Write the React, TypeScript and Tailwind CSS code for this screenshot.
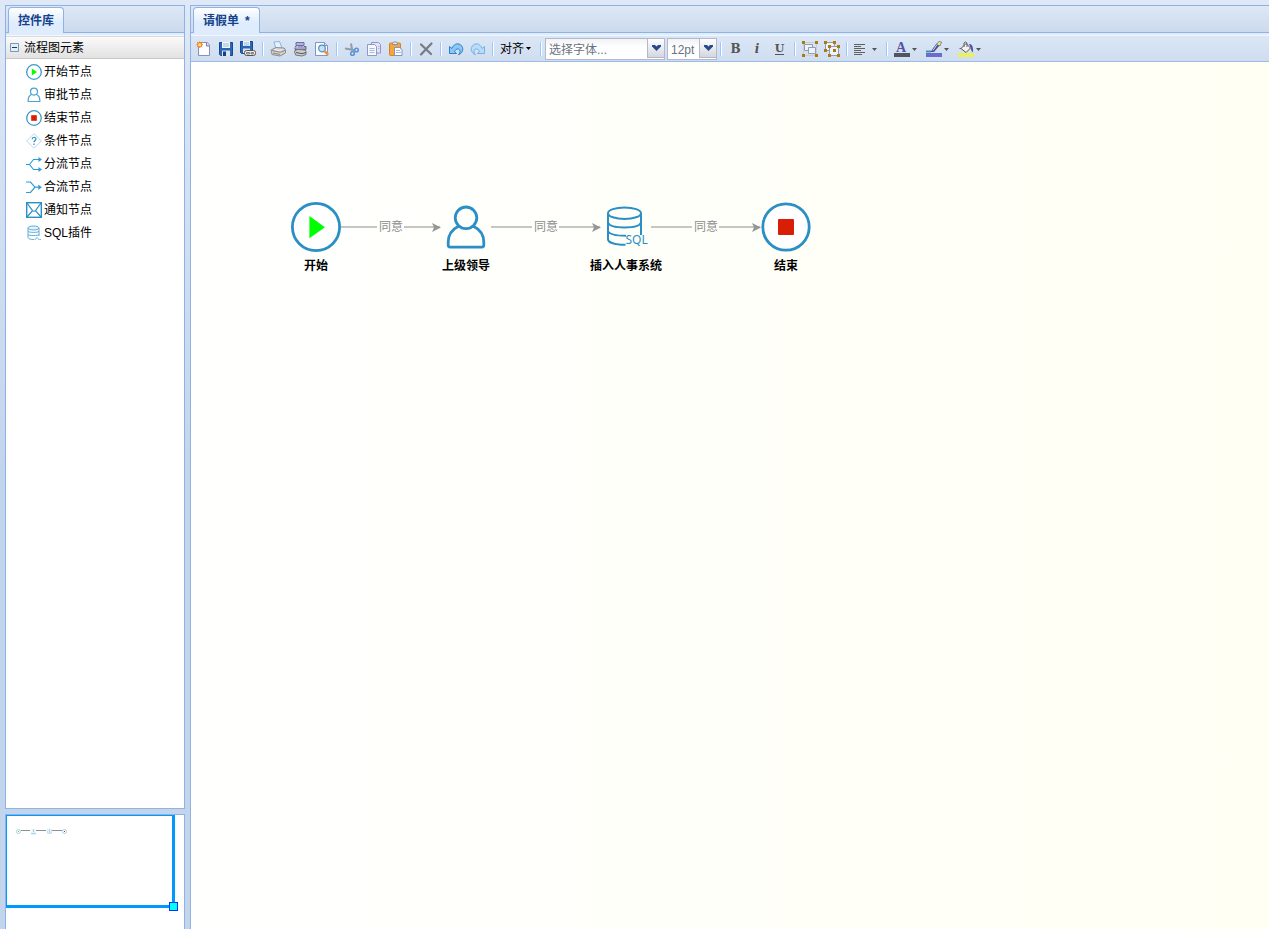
import React from "react";

type Kids = { children?: React.ReactNode };

function Svg({ children, size = 16, box = "0 0 16 16" }: Kids & { size?: number; box?: string }) {
  return (
    <svg width={size} height={size} viewBox={box} fill="none" aria-hidden="true" className="block shrink-0">
      {children}
    </svg>
  );
}

/* ---------- node drawings, 50 x 50 ---------- */

const BLUE = "#2a8fc5";

const startShape = (
  <>
    <circle cx="25" cy="25" r="23.6" fill="#fff" stroke={BLUE} strokeWidth="2.8" />
    <path d="M18.4 14 34 25.3 18.4 36.3Z" fill="#0f0" />
  </>
);
const endShape = (
  <>
    <circle cx="25" cy="25" r="23.2" fill="#fff" stroke={BLUE} strokeWidth="2.8" />
    <rect x="17" y="17" width="16" height="16" rx="1" fill="#d81e06" />
  </>
);
const personShape = (
  <g stroke={BLUE} strokeWidth="2.8">
    <circle cx="25" cy="15.8" r="10.8" />
    <path d="M17.5 24.2C11 27.4 7.200 33.300 7.200 40.300v2.800c0 1.200.8 2 2 2h31.600c1.200 0 2-.8 2-2v-2.800c0-7-3.800-12.900-10.300-16.100" />
  </g>
);
const sqlShape = (
  <g>
    <g stroke={BLUE} strokeWidth="2">
      <ellipse cx="23.500" cy="11.200" rx="16.500" ry="5.800" />
      <path d="M7 11.500V37c0 3.500 7 5.800 17.500 5.800" />
      <path d="M40 11.500V33M7 20.500c1 3.300 8 5 16.500 5s15.500-1.700 16.500-5M7 29c1.200 3.200 8 4.800 18 4.800" />
    </g>
    <text x="24.500" y="42" fontSize="12" fill={BLUE} fontFamily="Noto Sans, sans-serif">
      SQL
    </text>
  </g>
);

/* ---------- palette icons ---------- */

const PBLUE = "#2e9bd6";

const palette: { label: string; icon: React.ReactNode }[] = [
  {
    label: "开始节点",
    icon: (
      <Svg>
        <circle cx="8" cy="8" r="7.300" stroke="#3d9acb" strokeWidth="1.300" />
        <path d="M5.800 4.500 11 8l-5.200 3.500Z" fill="#0f0" />
      </Svg>
    ),
  },
  {
    label: "审批节点",
    icon: (
      <Svg>
        <g stroke="#4ba3cf" strokeWidth="1.200">
          <circle cx="8" cy="4.600" r="3.500" />
          <path d="M5.700 7.300C3.500 8.500 2.200 10.500 2.200 13v1.500h11.600V13c0-2.500-1.300-4.500-3.500-5.700" />
        </g>
      </Svg>
    ),
  },
  {
    label: "结束节点",
    icon: (
      <Svg>
        <circle cx="8" cy="8" r="7.300" stroke="#3d9acb" strokeWidth="1.300" />
        <rect x="5.200" y="5.200" width="5.600" height="5.600" fill="#d81e06" />
      </Svg>
    ),
  },
  {
    label: "条件节点",
    icon: (
      <Svg>
        <path d="M8 .7 15.300 8 8 15.300.7 8Z" stroke="#b5d8ea" />
        <path d="M6.200 6.200c0-2.600 3.700-2.500 3.700-.2C9.900 7.500 8 7.500 8 9.300M8 10.600v1.400" stroke={BLUE} strokeWidth="1.200" />
      </Svg>
    ),
  },
  {
    label: "分流节点",
    icon: (
      <Svg>
        <path d="M0 8.500h3.500l4-5H13M3.500 8.500l4 5H13" stroke={PBLUE} strokeWidth="1.200" />
        <path d="m12.500 1 3.500 2.500L12.500 6ZM12.500 11l3.500 2.500-3.500 2.500Z" fill={PBLUE} />
      </Svg>
    ),
  },
  {
    label: "合流节点",
    icon: (
      <Svg>
        <path d="M0 3h4.500L9 8.200 4.500 13.500H0M9 8.200h5" stroke={PBLUE} strokeWidth="1.200" />
        <path d="m12.300 5.500 3.500 2.700-3.500 2.700Z" fill={PBLUE} />
      </Svg>
    ),
  },
  {
    label: "通知节点",
    icon: (
      <Svg>
        <rect x=".7" y=".7" width="14.600" height="14.600" stroke={BLUE} strokeWidth="1.400" />
        <path d="m1 1 5.500 7.600q1.500 1.300 3 0L15 1M1 15l5.500-6.400M15 15 9.500 8.600" stroke={BLUE} strokeWidth="1.200" />
      </Svg>
    ),
  },
  {
    label: "SQL插件",
    icon: (
      <Svg>
        <g stroke="#5aabd6" strokeWidth="1">
          <ellipse cx="7.500" cy="3" rx="5.500" ry="2" fill="#e3f2fa" />
          <path d="M2 3v9.500c0 1.300 3 2 6 2M13 3v8M2 6.200c.6 1.600 10.400 1.600 11 0M2 9.400c.6 1.600 10.400 1.600 11 0" />
          <path d="M8.500 14.300q1.500.5 1.500-.8t1.300-.7q1 .2 1 1t1.200.7h1.500" strokeWidth=".8" />
        </g>
      </Svg>
    ),
  },
];

/* ---------- toolbar icons ---------- */

const icons = {
  fresh: (
    <Svg>
      <path d="M4 1.500h7.500l2 2.500v10.500H2.500V3z" fill="#fdfdff" stroke="#8791b5" />
      <path d="M10.500 1.500V5h3" fill="#d5dbee" stroke="#7580aa" />
      <circle cx="3.700" cy="3.700" r="2.600" fill="#f79436" />
      <path d="M3.700.4v6.600M.4 3.700h6.600M1.200 1.200l5 5M6.200 1.200l-5 5" stroke="#f2673a" strokeWidth=".8" />
      <circle cx="3.700" cy="3.700" r="1.500" fill="#fff16b" />
    </Svg>
  ),
  save: (
    <Svg>
      <path d="M1.500 1.500h13v13h-12l-1-1z" fill="#2b65b5" stroke="#174a91" />
      <path d="M4 1h8v6H4z" fill="#eef5fc" />
      <path d="M5 3h6M5 5h6" stroke="#9db9db" />
      <path d="M4 9.500h8V15H4z" fill="#dce4ec" />
      <path d="M5 10.500h3V15H5z" fill="#17407c" />
    </Svg>
  ),
  saveAs: (
    <Svg>
      <path d="M.5.5h12v12h-11l-1-1z" fill="#2b65b5" stroke="#174a91" />
      <path d="M3 0h7v5H3z" fill="#eef5fc" />
      <path d="M4 2h5M4 4h5" stroke="#9db9db" />
      <path d="M3 7.500h7V12H3z" fill="#dce4ec" />
      <rect x="4.500" y="9.500" width="11" height="5" rx="2" fill="#f0f0f0" stroke="#555" />
      <path d="M6.500 11.500h3v1.500h-3zM11 11.500h2.500v1.500H11z" fill="#ccc" stroke="#666" strokeWidth=".8" />
    </Svg>
  ),
  print: (
    <Svg>
      <path d="M4 1 9.500.5 12 7 6 8z" fill="#e7f3ff" stroke="#83b5e6" />
      <path d="m1 9 5-2.500 8 .5 1.500 2v3L10 15l-8-1.500z" fill="#d3d3d3" stroke="#8e8e8e" />
      <path d="m2 9.500 8 1.700 5-1.700M3 12l7 1.500" stroke="#888" />
      <path d="m4.500 8.500 5 1 3-1" stroke="#f6f6f6" />
      <path d="M12.500 12.200h1.500" stroke="#eeb13e" />
    </Svg>
  ),
  printSetup: (
    <Svg>
      <path d="M4 1.500h8v3H4z" fill="#b5b2dc" stroke="#6e6aa8" />
      <path d="M6 5h5v2H6z" fill="#9a97c4" />
      <path d="M3 5.500h1.500M12 5.500h2v3H3v-2" fill="#a5a2c8" stroke="#66638e" />
      <path d="m2.500 10 3-1.500 7.500.5 1 1.500v3L10 15l-6.500-1z" fill="#cecece" stroke="#777" />
      <path d="m4 11.500 6 1.200 4-1.200" stroke="#555" />
    </Svg>
  ),
  preview: (
    <Svg>
      <path d="M1.500 1.500h9l3 3v10H1.500z" fill="#fbfcff" stroke="#8793b8" />
      <path d="M10.500 1.500v3h3" fill="#d5dcf0" stroke="#8793b8" />
      <circle cx="8" cy="7.500" r="3.300" fill="#bfe4fa" stroke="#4c8fc4" strokeWidth="1.200" />
      <path d="m10.800 10.300 2.700 2.700" stroke="#e8914a" strokeWidth="2.500" strokeLinecap="round" />
    </Svg>
  ),
  cut: (
    <Svg>
      <path d="m1 7.500 9 1.500M7 2.500 8.500 11" stroke="#929daa" strokeWidth="2" />
      <circle cx="12.500" cy="9" r="1.800" fill="#dbe7f6" stroke="#5c94dc" strokeWidth="1.600" />
      <circle cx="8.500" cy="12.500" r="1.800" fill="#dbe7f6" stroke="#5c94dc" strokeWidth="1.600" />
    </Svg>
  ),
  copy: (
    <Svg>
      <path d="M5.500 1.500h7l2 2V12h-9z" fill="#e4e2f5" stroke="#9891c4" />
      <path d="M1.500 3.500h7l2 2v9h-9z" fill="#f6f9ff" stroke="#8b9bc6" />
      <path d="M3.500 7.500h5M3.500 9.500h5M3.500 11.500h5M12 5.500h1.500M12 7.500h1.500" stroke="#a9b9db" />
    </Svg>
  ),
  paste: (
    <Svg>
      <rect x="1.500" y="2" width="11" height="12.500" rx="1" fill="#f6a43e" stroke="#d78325" />
      <path d="M4.500 3.500V2l1.500-1h2l1.500 1v1.500z" fill="#e8edf5" stroke="#8b8f9c" />
      <path d="M6.500 6.500h5l2.500 2v6h-7.500z" fill="#fafcff" stroke="#8295bc" />
      <path d="M8 9.500h4M8 11.500h5" stroke="#a9badb" />
    </Svg>
  ),
  remove: (
    <Svg>
      <path d="m3 3.500 10 9.500M13.500 2.500 3 13.500" stroke="#767b86" strokeWidth="2.200" strokeLinecap="round" />
    </Svg>
  ),
  undo: (
    <Svg>
      <path
        d="M1.500 5.500v7h7L6.500 10.300c2-3.300 5-3 5.500-.3.200 1.500-.5 2.700-1.500 3.700 5-1.700 5.500-7.200 2-9.900C9 1.500 5.500 3.500 4 7.500z"
        fill="#8ac8fa"
        stroke="#2d7fcf"
        strokeLinejoin="round"
      />
    </Svg>
  ),
  redo: (
    <Svg>
      <path
        d="M14.500 5.500v7h-7l2-2.200c-2-3.300-5-3-5.500-.3-.2 1.500.5 2.700 1.500 3.700-5-1.700-5.500-7.200-2-9.900C7 1.500 10.500 3.500 12 7.500z"
        fill="#b8dcfa"
        stroke="#76b1e4"
        strokeLinejoin="round"
      />
    </Svg>
  ),
  bold: (
    <Svg>
      <text x="7.500" y="12" textAnchor="middle" fontSize="12" fontWeight="700" fill="#555" fontFamily="DejaVu Serif, serif">
        B
      </text>
    </Svg>
  ),
  italic: (
    <Svg>
      <text x="7" y="12" textAnchor="middle" fontSize="12" fontWeight="700" fontStyle="italic" fill="#555" fontFamily="DejaVu Serif, serif">
        i
      </text>
    </Svg>
  ),
  underline: (
    <Svg>
      <text x="7.500" y="11" textAnchor="middle" fontSize="11" fontWeight="700" fill="#555" fontFamily="DejaVu Serif, serif">
        U
      </text>
      <path d="M3 13.500h9" stroke="#555" />
    </Svg>
  ),
  group: (
    <Svg>
      <path d="M3 1.500h10M3 14.500h10M1.500 3v10M14.500 3v10" stroke="#c9ccd2" />
      <path d="M2.500 3.500h8v6h-8z" fill="#eef3fb" stroke="#929dae" />
      <path d="M6.500 6.500h7v6h-7z" fill="#eef3fb" stroke="#929dae" />
      <path d="M0 0h3v3H0zM13 0h3v3h-3zM0 13h3v3H0zM13 13h3v3h-3z" fill="#a97b12" />
    </Svg>
  ),
  ungroup: (
    <Svg>
      <path d="M1.500 1.500h9v8h-9z" fill="#eef3fb" stroke="#929dae" />
      <path d="M5.500 5.500h9v9h-9z" fill="#eef3fb" stroke="#929dae" />
      <path d="M0 0h3v3H0zM9 0h3v3H9zM0 8h3v3H0zM9 8h3v3H9zM4 4h3v3H4zM13 4h3v3h-3zM4 13h3v3H4zM13 13h3v3h-3z" fill="#a97b12" />
    </Svg>
  ),
  align: (
    <Svg>
      <path d="M0 3.500h11M0 5.500h7M0 7.500h11M0 9.500h7M0 11.500h11M0 13.500h8" stroke="#606060" />
    </Svg>
  ),
  fontColor: (
    <Svg>
      <text x="7" y="11" textAnchor="middle" fontSize="14" fontWeight="700" fill="#5553a5" fontFamily="Liberation Serif, serif">
        A
      </text>
      <path d="M0 12h16v4H0z" fill="#505560" />
    </Svg>
  ),
  lineColor: (
    <Svg>
      <path d="M0 12h16v4H0z" fill="#6a6bd5" />
      <path d="M0 10.500h5" stroke="#3f9aa0" strokeWidth="2" />
      <path d="m4.500 11 6-8.500 3 2-5.500 6.500z" fill="#4b4c91" />
      <path d="m10.800 3.500 2-3 2.700.5-1.500 4z" fill="#f0ef74" stroke="#60608f" strokeWidth=".7" />
      <path d="m7 9.500 4-6" stroke="#fff" strokeWidth=".8" />
    </Svg>
  ),
  fillColor: (
    <Svg>
      <path d="M0 12h16v4H0z" fill="#ecf05a" />
      <path d="m8 2.500 4.500 4.500L8 11.500 3 7.500z" fill="#f3f3f3" stroke="#555" />
      <path d="M6 6V2q1-2.500 3 0v4M3 7.500H1.500" stroke="#666" />
      <path d="M11 3c3 0 4.500 2.500 4 8.500-1.500-1-2-3-2.500-5z" fill="#5553a5" />
    </Svg>
  ),
};

function Arrow({ className }: { className: string }) {
  return (
    <svg width="5" height="3" viewBox="0 0 5 3" aria-hidden="true" className={className}>
      <path d="M0 0h5L2.500 3z" fill="currentColor" />
    </svg>
  );
}

function Tool({ name, label, menu }: { name: keyof typeof icons; label: string; menu?: boolean }) {
  return (
    <button
      type="button"
      aria-label={label}
      className={
        menu
          ? "flex h-6 w-8 shrink-0 items-center gap-0.5 pl-[3px] text-[#555]"
          : "flex h-6 w-[22px] shrink-0 items-center justify-center"
      }
    >
      {icons[name]}
      {menu && <Arrow className="mt-px shrink-0" />}
    </button>
  );
}

function Separator() {
  return (
    <span className="flex h-[14px] w-2 shrink-0 justify-center">
      <span className="w-0.5 border-r border-white bg-[#98c8ff]" />
    </span>
  );
}

function Combo({ label, value, wide }: { label: string; value: string; wide?: boolean }) {
  return (
    <label className={wide ? "relative h-[22px] w-[120px] shrink-0" : "relative h-[22px] w-[50px] shrink-0"}>
      <select
        aria-label={label}
        defaultValue={value}
        className="h-full w-full appearance-none border border-[#b5b8c8] bg-linear-to-b from-[#f0f2f4] to-white to-40% pt-0.5 pl-[3px] text-xs text-gray-500 outline-none"
      >
        <option>{value}</option>
      </select>
      <span className="pointer-events-none absolute top-0 right-0 flex h-5 w-[18px] items-center justify-center border border-[#b5b8c8] bg-linear-to-b from-white to-[#d3d7df]">
        <svg width="9" height="6" viewBox="0 0 9 6" aria-hidden="true">
          <path d="M0 0h3l1.500 1.500L6 0h3v1.500L4.500 6 0 1.500z" fill="#28498a" />
        </svg>
      </span>
    </label>
  );
}

function TabStrip({ title, modified }: { title: string; modified?: boolean }) {
  return (
    <>
      <div className="flex h-[27px] shrink-0 items-end border-b border-[#8db2e3] bg-linear-to-b from-[#dee8f5] to-[#cbdaee] pl-0.5">
        <button
          type="button"
          role="tab"
          aria-selected="true"
          className="-mb-px flex h-[26px] items-center gap-1.5 rounded-t border border-b-0 border-[#8db2e3] bg-linear-to-b from-white to-[#deecfd] to-60% px-[9px] text-xs font-bold text-[#15428b]"
        >
          {title}
          {modified && <span>*</span>}
        </button>
      </div>
      <div className="h-[3px] shrink-0 border-b border-[#f2f7fd] bg-[#deecfd]" />
    </>
  );
}

/* ---------- flow diagram ---------- */

const nodes = [
  { x: 125, label: "开始", shape: startShape },
  { x: 275, label: "上级领导", shape: personShape },
  { x: 435, label: "插入人事系统", shape: sqlShape },
  { x: 595, label: "结束", shape: endShape },
];

const edges = [
  { from: 150, to: 250, label: "同意" },
  { from: 300, to: 410, label: "同意" },
  { from: 460, to: 570, label: "同意" },
];

function Diagram() {
  return (
    <div className="relative min-h-0 flex-1 overflow-hidden bg-linear-to-r from-[#fffffe] to-[#fffff4]">
      {edges.map((e) => (
        <div
          key={e.from}
          className="absolute top-[156px] flex h-[18px] items-center"
          style={{ left: e.from, width: e.to - e.from }}
        >
          <span className="h-0.5 flex-1 bg-[#c6c6c3]" />
          <span className="pr-px pl-0.5 text-xs text-[#8c8c8c]">{e.label}</span>
          <span className="h-0.5 flex-1 bg-[#c6c6c3]" />
          <svg width="9" height="9" viewBox="0 0 9 9" aria-hidden="true" className="-ml-2 shrink-0">
            <path d="M0 0 9 4.500 0 9 2 4.500z" fill="#969696" />
          </svg>
        </div>
      ))}
      {nodes.map((n) => (
        <div
          key={n.label}
          className="absolute top-[140px] flex w-20 -translate-x-1/2 flex-col items-center gap-[5px]"
          style={{ left: n.x }}
        >
          <Svg size={50} box="0 0 50 50">
            {n.shape}
          </Svg>
          <span className="text-xs leading-[18px] font-bold whitespace-nowrap text-black">{n.label}</span>
        </div>
      ))}
    </div>
  );
}

function Overview() {
  return (
    <div className="relative h-[115px] shrink-0 border border-b-0 border-[#8db2e3] bg-white">
      <div className="relative h-[93px] w-[169px] border-t border-r-[3px] border-b-[3px] border-l border-[#0099ff]">
        <svg width="60" height="10" viewBox="0 0 60 10" fill="none" aria-hidden="true" className="mt-2.5 ml-1.5">
          <path d="M8 4.500h9M23 4.500h10M39 4.500h10" stroke="#8f8f8f" />
          <g stroke="#a8d3e8">
            <circle cx="5.500" cy="5.500" r="2" />
            <circle cx="51.500" cy="5.500" r="2" />
            <path d="M20.500 3v3M18 7.500h5M36.500 3v5" strokeWidth="1.500" />
            <path d="M34.500 3.500v4h4v-4" stroke="#c9e3f0" />
          </g>
          <path d="M5 5h1v1H5z" fill="#2be52b" />
          <path d="M51 5h1v1h-1z" fill="#d81e06" />
        </svg>
        <span className="absolute -right-[6px] -bottom-[6px] h-[9px] w-[9px] border border-[#0033ff] bg-[#00ffff]" />
      </div>
    </div>
  );
}

export default function App() {
  return (
    <div className="flex h-screen gap-[5px] overflow-hidden bg-linear-to-b from-[#dfe8f6] to-[#c3d5ed] to-50% pt-[5px] pl-[5px] font-['Liberation_Sans','Noto_Sans_CJK_SC',sans-serif] text-xs text-black">
      <aside className="flex w-[180px] shrink-0 flex-col gap-[5px]">
        <section className="flex min-h-0 flex-1 flex-col border border-[#8db2e3] bg-white">
          <TabStrip title="控件库" />
          <h2 className="flex h-[23px] shrink-0 items-center gap-[5px] border-y border-t-[#dadada] border-b-[#c9c9c9] bg-linear-to-b from-[#fafafa] to-[#e2e2e2] pl-1">
            <svg width="9" height="9" viewBox="0 0 9 9" fill="none" aria-hidden="true">
              <path d="M.5.5h8v8h-8z" fill="#e4edf6" stroke="#7898b5" />
              <path d="M2 4.500h5" stroke="#1c3c68" />
            </svg>
            流程图元素
          </h2>
          <ul className="pl-5">
            {palette.map((p) => (
              <li key={p.label} className="flex h-[23px] items-center gap-0.5 pt-0.5">
                {p.icon}
                {p.label}
              </li>
            ))}
          </ul>
        </section>
        <Overview />
      </aside>

      <main className="flex min-w-0 flex-1 flex-col border-t border-l border-[#8db2e3]">
        <TabStrip title="请假单" modified />
        <div
          role="toolbar"
          className="flex h-[26px] shrink-0 items-center border-b border-[#99bbe8] bg-linear-to-b from-[#dbe7f6] to-[#cfddef] pl-0.5"
        >
          <Tool name="fresh" label="新建" />
          <Tool name="save" label="保存" />
          <Tool name="saveAs" label="另存为" />
          <Separator />
          <Tool name="print" label="打印" />
          <Tool name="printSetup" label="打印设置" />
          <Tool name="preview" label="预览" />
          <Separator />
          <Tool name="cut" label="剪切" />
          <Tool name="copy" label="复制" />
          <Tool name="paste" label="粘贴" />
          <Separator />
          <Tool name="remove" label="删除" />
          <Separator />
          <Tool name="undo" label="撤销" />
          <Tool name="redo" label="重做" />
          <Separator />
          <button type="button" className="flex h-6 w-10 shrink-0 items-center gap-0.5 pl-[3px] whitespace-nowrap">
            对齐
            <Arrow className="shrink-0" />
          </button>
          <Separator />
          <div className="flex gap-0.5">
            <Combo label="字体" value="选择字体..." wide />
            <Combo label="字号" value="12pt" />
          </div>
          <Separator />
          <Tool name="bold" label="粗体" />
          <Tool name="italic" label="斜体" />
          <Tool name="underline" label="下划线" />
          <Separator />
          <Tool name="group" label="组合" />
          <Tool name="ungroup" label="取消组合" />
          <Separator />
          <Tool name="align" label="文本对齐" menu />
          <Separator />
          <Tool name="fontColor" label="字体颜色" menu />
          <Tool name="lineColor" label="线条颜色" menu />
          <Tool name="fillColor" label="填充颜色" menu />
        </div>
        <Diagram />
      </main>
    </div>
  );
}
